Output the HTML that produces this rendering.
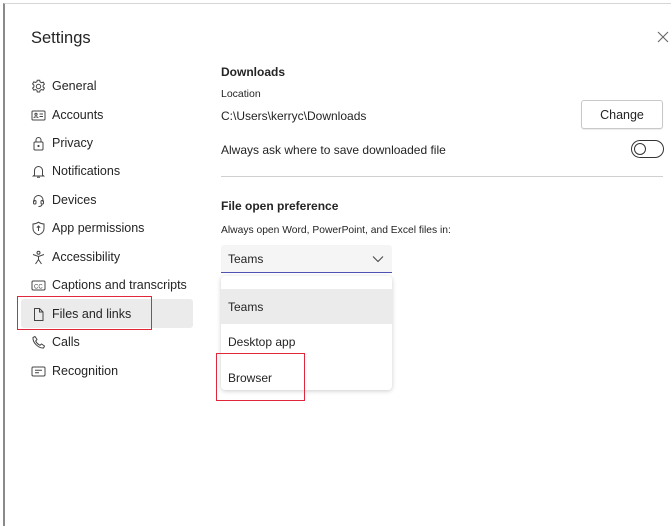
<!DOCTYPE html>
<html><head><meta charset="utf-8"><style>
*{margin:0;padding:0;box-sizing:border-box}
html,body{width:671px;height:526px;overflow:hidden}
body{background:#fff;font-family:"Segoe UI","Liberation Sans",sans-serif;color:#242424;position:relative}
.frame{position:absolute;left:3px;top:3px;width:680px;height:530px;border-left:2px solid #8a8a8a;border-top:1px solid #d6d6d6}
.abs{position:absolute;white-space:nowrap}
.nav{position:absolute;left:31px;font-size:12.5px;color:#242424;white-space:nowrap;width:170px;height:16px}
.nav svg{position:absolute;left:0;top:1px}
.nav span{position:absolute;left:21px;top:1px}
.red{position:absolute;border:1.5px solid #e0283a}
</style></head><body>
<div class="frame"></div>
<div class="abs" style="left:31px;top:29px;font-size:16.5px">Settings</div>
<svg class="abs" style="left:657px;top:31px" width="12" height="12"><path d="M1 1L11 11M11 1L1 11" stroke="#666" stroke-width="1.1"/></svg>

<div class="abs" style="left:21px;top:299px;width:172px;height:29px;background:#ebebeb;border-radius:3px"></div>
<div class="red" style="left:17px;top:296px;width:135px;height:34px"></div>

<div class="nav" style="top:78px"><svg width="15" height="15" viewBox="0 0 15 15" fill="none" stroke="#444" stroke-width="1"><circle cx="7.5" cy="7.5" r="2.2"/><path d="M6.3 1.2h2.4l.4 1.7 1.5.8 1.6-.6 1.2 2-1.3 1.2v1.6l1.3 1.2-1.2 2-1.6-.6-1.5.8-.4 1.7H6.3l-.4-1.7-1.5-.8-1.6.6-1.2-2 1.3-1.2V6.1L1.6 4.9l1.2-2 1.6.6 1.5-.8z"/></svg><span>General</span></div>
<div class="nav" style="top:107px"><svg width="15" height="15" viewBox="0 0 15 15" fill="none" stroke="#444"><rect x="1" y="3" width="13" height="9" rx="1"/><circle cx="5" cy="6.3" r="1.1"/><path d="M3 10c0-1.5 4-1.5 4 0M8.5 6h3.5M8.5 8.5h3.5"/></svg><span>Accounts</span></div>
<div class="nav" style="top:135px"><svg width="15" height="15" viewBox="0 0 15 15" fill="none" stroke="#444"><rect x="3" y="6" width="9" height="8" rx="1"/><path d="M5 6V4a2.5 2.5 0 015 0v2"/><circle cx="7.5" cy="10" r=".6" fill="#444"/></svg><span>Privacy</span></div>
<div class="nav" style="top:163px"><svg width="15" height="15" viewBox="0 0 15 15" fill="none" stroke="#444"><path d="M3.5 11V6.5a4 4 0 018 0V11l1.2 1H2.3zM6 13.3h3"/></svg><span>Notifications</span></div>
<div class="nav" style="top:192px"><svg width="15" height="15" viewBox="0 0 15 15" fill="none" stroke="#444"><path d="M3 9V7a4.5 4.5 0 019 0v2"/><rect x="2.5" y="7.5" width="2.5" height="3.5" rx="1"/><rect x="10" y="7.5" width="2.5" height="3.5" rx="1"/><path d="M11 11c0 2-2 2.5-3.5 2.5"/></svg><span>Devices</span></div>
<div class="nav" style="top:220px"><svg width="15" height="15" viewBox="0 0 15 15" fill="none" stroke="#444"><path d="M7.5 1.2c2 1.3 3.5 1.800 5.5 1.8v4.5c0 3.3-2.5 5.3-5.5 6.3-3-1-5.5-3-5.5-6.3V3c2 0 3.5-.5 5.5-1.8zM7.5 5v5M5.8 6.7l1.7-1.7 1.7 1.7"/></svg><span>App permissions</span></div>
<div class="nav" style="top:249px"><svg width="15" height="15" viewBox="0 0 15 15" fill="none" stroke="#444"><circle cx="7.5" cy="2.8" r="1.5"/><path d="M2 4.5l5.5 2 5.5-2M7.5 6.5v3L4.5 14M7.5 9.5l3 4.5"/></svg><span>Accessibility</span></div>
<div class="nav" style="top:277px"><svg width="15" height="15" viewBox="0 0 15 15" fill="none" stroke="#444"><rect x="1" y="3" width="13" height="9" rx="1.2"/><text x="3" y="10.3" font-size="6" font-family="Liberation Sans" fill="#444" stroke="none">CC</text></svg><span>Captions and transcripts</span></div>
<div class="nav" style="top:306px"><svg width="15" height="15" viewBox="0 0 15 15" fill="none" stroke="#444"><path d="M3.5 1.5h5l3.5 3.5v8.5h-8.5zM8.5 1.5V5H12"/></svg><span>Files and links</span></div>
<div class="nav" style="top:334px"><svg width="15" height="15" viewBox="0 0 15 15" fill="none" stroke="#444"><path d="M4 1.5l2 3-1.3 1.5c.8 1.8 2.4 3.4 4.3 4.3L10.5 9l3 2-1 2c-5 .5-11-5.5-10.5-10.5z"/></svg><span>Calls</span></div>
<div class="nav" style="top:363px"><svg width="15" height="15" viewBox="0 0 15 15" fill="none" stroke="#444"><rect x="1" y="3" width="13" height="9" rx="1.2"/><path d="M4 6.2h7M4 8.8h4"/></svg><span>Recognition</span></div>

<div class="abs" style="left:221px;top:65px;font-size:12px;font-weight:bold">Downloads</div>
<div class="abs" style="left:221px;top:88px;font-size:10.5px">Location</div>
<div class="abs" style="left:221px;top:109px;font-size:12px">C:\Users\kerryc\Downloads</div>
<div class="abs" style="left:581px;top:100px;width:82px;height:29px;border:1px solid #c8c8c8;border-radius:3px;font-size:12.5px;text-align:center;line-height:28px;box-shadow:0 1px 1px rgba(0,0,0,.08)">Change</div>
<div class="abs" style="left:221px;top:143px;font-size:12px">Always ask where to save downloaded file</div>
<div class="abs" style="left:631px;top:140px;width:33px;height:18px;border:1.2px solid #333;border-radius:9px"></div>
<div class="abs" style="left:634px;top:143px;width:12px;height:12px;border:1.2px solid #333;border-radius:50%"></div>
<div class="abs" style="left:221px;top:176px;width:442px;height:1px;background:#d0d0d0"></div>

<div class="abs" style="left:221px;top:199px;font-size:12px;font-weight:bold">File open preference</div>
<div class="abs" style="left:221px;top:225px;font-size:10.3px">Always open Word, PowerPoint, and Excel files in:</div>
<div class="abs" style="left:221px;top:245px;width:171px;height:28px;background:#f5f5f5;border-bottom:1.5px solid #4f52b2;border-radius:3px 3px 0 0"></div>
<div class="abs" style="left:228px;top:252px;font-size:12px">Teams</div>
<svg class="abs" style="left:372px;top:255px" width="12" height="8"><path d="M1 1.5l5 5 5-5" fill="none" stroke="#444"/></svg>

<div class="abs" style="left:221px;top:276px;width:171px;height:114px;background:#fff;border-radius:4px;box-shadow:0 1px 5px rgba(0,0,0,.2)"></div>
<div class="abs" style="left:221px;top:289px;width:171px;height:35px;background:#ebebeb"></div>
<div class="abs" style="left:228px;top:300px;font-size:12px">Teams</div>
<div class="abs" style="left:228px;top:335px;font-size:12px">Desktop app</div>
<div class="abs" style="left:228px;top:371px;font-size:12px">Browser</div>
<div class="red" style="left:216px;top:353px;width:89px;height:48px"></div>
</body></html>
